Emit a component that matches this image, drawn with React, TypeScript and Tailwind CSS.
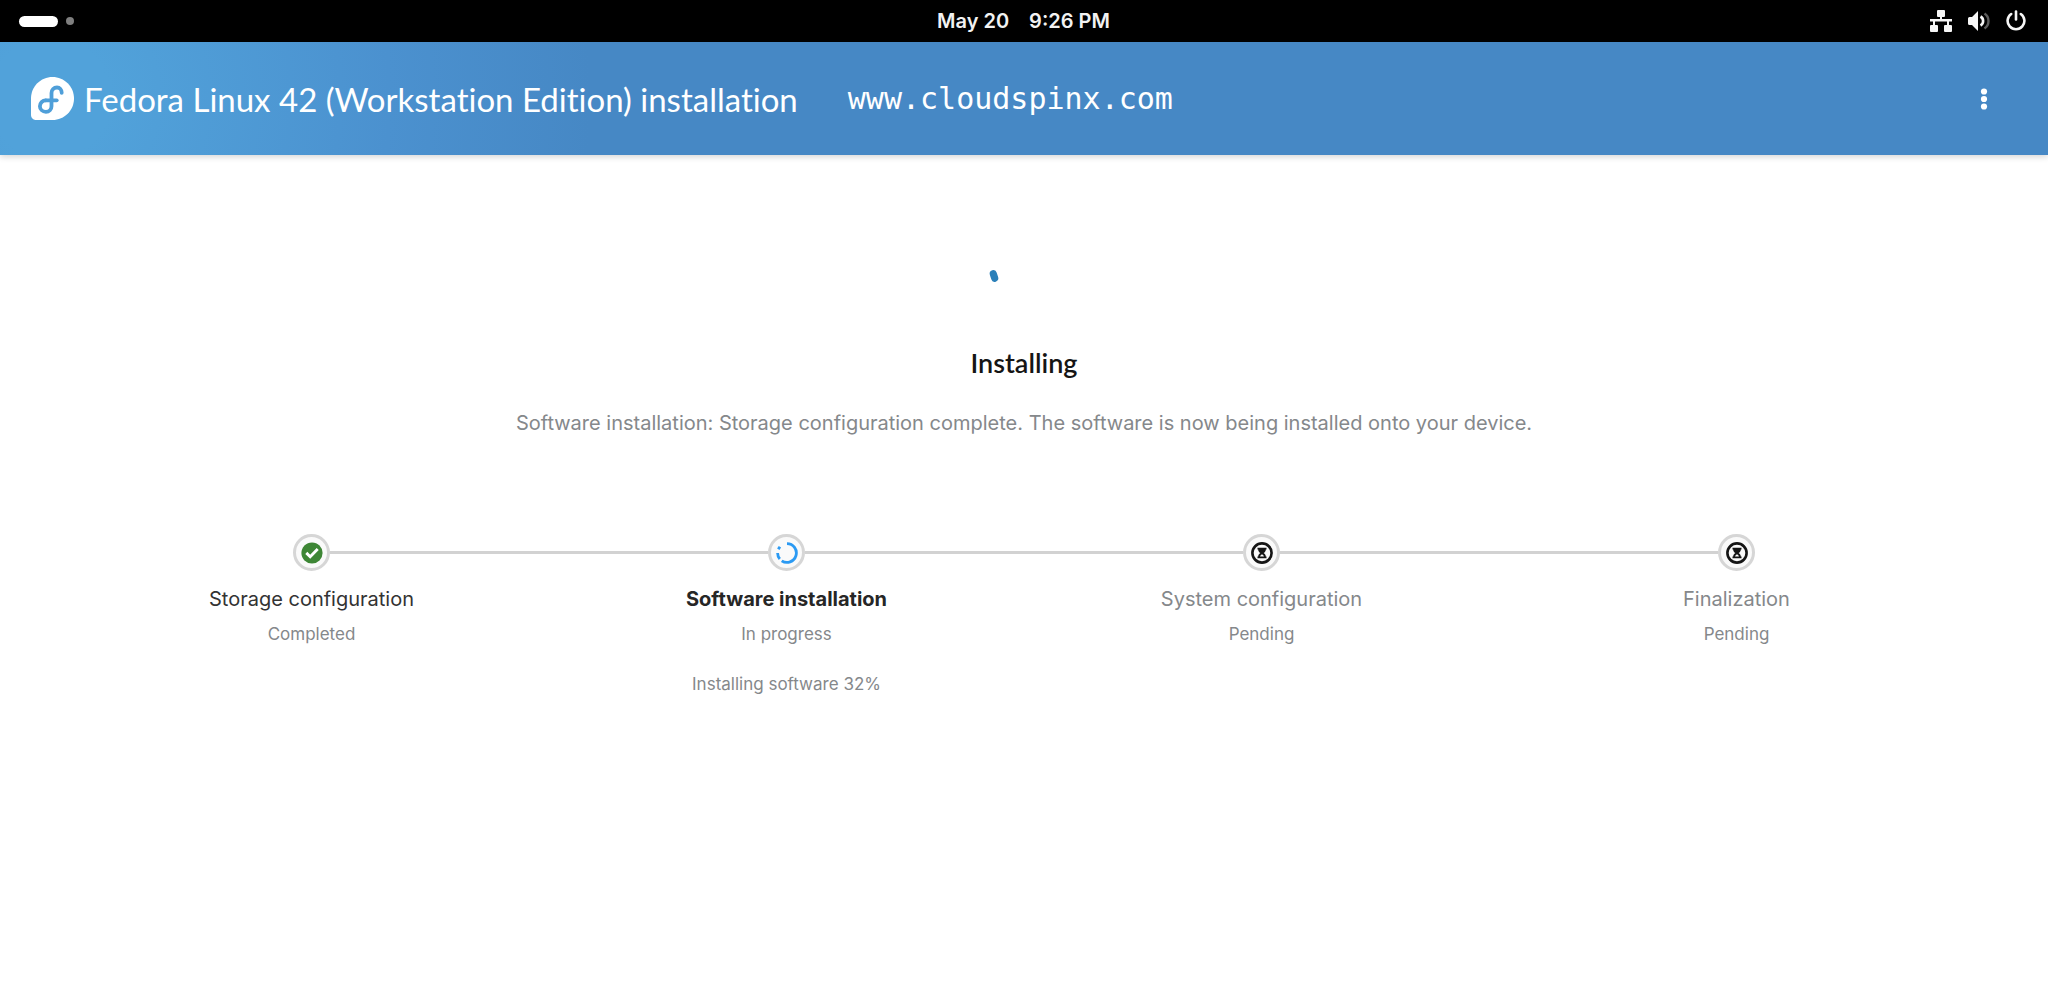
import React from 'react';

type StepStatus = 'completed' | 'progress' | 'pending';

interface Step {
  id: string;
  title: string;
  label: string;
  status: StepStatus;
  detail?: string;
}

const STEPS: Step[] = [
  { id: 'storage', title: 'Storage configuration', label: 'Completed', status: 'completed' },
  { id: 'software', title: 'Software installation', label: 'In progress', status: 'progress', detail: 'Installing software 32%' },
  { id: 'system', title: 'System configuration', label: 'Pending', status: 'pending' },
  { id: 'final', title: 'Finalization', label: 'Pending', status: 'pending' },
];

const TITLE_STYLES: Record<StepStatus, string> = {
  completed: 'text-[#333333]',
  progress: 'text-[#262626] font-bold',
  pending: 'text-[#85888b]',
};

const FedoraLogo = () => (
  <svg viewBox="0 0 43 43" className="size-[43px] shrink-0" aria-hidden="true">
    <path d="M21.5 0C9.6 0 0 9.6 0 21.5V38c0 2.8 2.2 5 5 5h16.5C33.4 43 43 33.4 43 21.5S33.4 0 21.5 0z" fill="#fff" />
    <g fill="none" stroke="#4f9fd9" strokeWidth="3.8" strokeLinecap="round">
      <path d="M30.7 15.8c0-3.2-2-5.3-4.7-5.3-3.2 0-5.5 2.200-5.500 5.500v13.200c0 3.200-2.300 5.600-5.600 5.600s-6-2.400-6-5.600 2.600-5.900 5.800-5.900" />
      <path d="M14.7 23.300h11" />
    </g>
  </svg>
);

const NetworkIcon = () => (
  <svg viewBox="0 0 22 22" className="size-[22px]" fill="#f6f6f6" aria-hidden="true">
    <rect x="7" y="0" width="8" height="7" rx="1" />
    <rect x="10" y="6" width="2" height="5" />
    <rect x="0" y="9" width="22" height="2.500" />
    <rect x="3" y="11" width="2" height="5" />
    <rect x="17" y="11" width="2" height="5" />
    <rect x="0" y="15" width="8" height="7" rx="1" />
    <rect x="14" y="15" width="8" height="7" rx="1" />
  </svg>
);

const VolumeIcon = () => (
  <svg viewBox="0 0 22 22" className="size-[22px]" aria-hidden="true">
    <path d="M0 8.500Q0 7 1.500 7H4l6-6V21l-6-6H1.500Q0 15 0 13.500z" fill="#f6f6f6" />
    <path d="M12.500 6.500c3.500 2 3.500 7 0 9" fill="none" stroke="#f6f6f6" strokeWidth="2.600" />
    <path d="M16.500 3.500c5.300 3.500 5.300 11.500 0 15" fill="none" stroke="#5c5c5c" strokeWidth="2.400" />
  </svg>
);

const PowerIcon = () => (
  <svg viewBox="1 0 22 22" className="size-[22px]" fill="none" stroke="#f6f6f6" strokeWidth="2.600" strokeLinecap="round" aria-hidden="true">
    <path d="M6.200 4A8.400 8.400 0 1 0 15.800 4" />
    <path d="M11 1.500v8" />
  </svg>
);

const StatusIcon: React.FC<{ status: StepStatus }> = ({ status }) => {
  if (status === 'completed') {
    return (
      <svg viewBox="0 0 22 22" className="size-[22px]" aria-hidden="true">
        <circle cx="11" cy="11" r="10.600" fill="#3d8635" />
        <path d="M5.300 10.900l3.900 3.900 7.500-7.700" fill="none" stroke="#fff" strokeWidth="2.900" />
      </svg>
    );
  }
  if (status === 'progress') {
    return (
      <svg viewBox="0 0 22 22" className="size-[22px]" fill="none" stroke="#2b9af3" strokeWidth="2.800" aria-hidden="true">
        <path d="M11 1.600a9.400 9.400 0 1 1-5.300 17.200" />
        <path d="M3.800 17a9.400 9.400 0 0 1-2.200-6" />
        <path d="M2.300 7.300L3.900 4.800" />
      </svg>
    );
  }
  return (
    <svg viewBox="0 0 22 22" className="size-[22px]" aria-hidden="true">
      <circle cx="11" cy="11" r="9.600" fill="none" stroke="#151515" strokeWidth="2.600" />
      <path d="M6.500 5.700h9v1.700h-.7c0 1.600-.8 2.800-2.200 3.600 1.400.8 2.200 2 2.200 3.600h.7v1.700h-9v-1.700h.7c0-1.600.8-2.800 2.200-3.600-1.400-.8-2.200-2-2.200-3.600h-.7z" fill="#151515" />
      <path d="M9.100 14.500c.2-1 .9-1.700 1.900-2.200 1 .5 1.700 1.200 1.900 2.200z" fill="#fafafa" />
    </svg>
  );
};

const TopBar = () => (
  <div className="grid h-[42px] grid-cols-3 items-center bg-black pl-[19px] pr-5 font-['Inter',sans-serif]">
    <div className="flex items-center gap-2">
      <span className="h-[11px] w-[39px] rounded-full bg-white" />
      <span className="size-2 rounded-full bg-[#7f7f7f]" />
    </div>
    <div className="flex justify-center gap-5 text-[20px] font-semibold text-[#f2f2f2]">
      <span>May 20</span>
      <span>9:26 PM</span>
    </div>
    <div className="flex items-center justify-end gap-4">
      <NetworkIcon />
      <VolumeIcon />
      <PowerIcon />
    </div>
  </div>
);

const Header = () => (
  <header className="flex h-[113px] items-center bg-[radial-gradient(circle_at_50px_50%,#51a2da_0px,#51a2da_60px,#4b91cf_340px,#4688c5_540px)] pl-[31px] pr-12 text-white shadow-[0_2px_6px_rgba(0,0,0,0.16)]">
    <FedoraLogo />
    <h1 className="ml-2.5 font-['Lato',sans-serif] text-[33px] leading-10 [font-variant-ligatures:none]">
      Fedora Linux 42 (Workstation Edition) installation
    </h1>
    <span className="ml-[50px] font-['DejaVu_Sans_Mono',monospace] text-[30px] leading-10">www.cloudspinx.com</span>
    <button type="button" aria-label="Menu" className="ml-auto flex h-10 w-8 items-center justify-center">
      <svg viewBox="0 0 8 22" className="h-[22px] w-2" fill="#fff" aria-hidden="true">
        <circle cx="4" cy="3.500" r="3.100" />
        <circle cx="4" cy="11" r="3.100" />
        <circle cx="4" cy="18.500" r="3.100" />
      </svg>
    </button>
  </header>
);

const Spinner = () => (
  <svg viewBox="0 0 72 72" className="size-[72px]" role="progressbar" aria-label="Installing">
    <path d="M5.300 42.800L6.700 47.200" fill="none" stroke="#2b80b9" strokeWidth="7.200" strokeLinecap="round" />
  </svg>
);

export default function App() {
  return (
    <div className="min-h-screen bg-white font-['Inter',sans-serif]">
      <TopBar />
      <Header />

      <main className="flex flex-col items-center px-[74px] pt-[76px]">
        <Spinner />
        <h2 className="mt-10 font-['Lato',sans-serif] text-[27px] font-semibold leading-10 text-[#151515] [font-variant-ligatures:none]">
          Installing
        </h2>
        <p className="mt-6 text-[20px] leading-8 text-[#85888b]">
          Software installation: Storage configuration complete. The software is now being installed onto your device.
        </p>

        <ol className="mt-[95px] grid w-full grid-cols-4">
          {STEPS.map((step, idx) => (
            <li key={step.id} className="flex flex-col items-center text-center">
              <div className="flex w-full items-center">
                <span className={`h-[3px] flex-1 ${idx > 0 ? 'bg-[#d2d2d2]' : ''}`} />
                <span className="flex size-[37px] items-center justify-center rounded-full border-[3px] border-[#d6d6d6] bg-[#fafafa]">
                  <StatusIcon status={step.status} />
                </span>
                <span className={`h-[3px] flex-1 ${idx < STEPS.length - 1 ? 'bg-[#d2d2d2]' : ''}`} />
              </div>
              <div className={`mt-3 text-[20px] leading-8 ${TITLE_STYLES[step.status]}`}>{step.title}</div>
              <div className="mt-[3px] text-[17px] leading-8 text-[#85888b]">{step.label}</div>
              {step.detail && <div className="mt-[18px] text-[17px] leading-8 text-[#85888b]">{step.detail}</div>}
            </li>
          ))}
        </ol>
      </main>
    </div>
  );
}
